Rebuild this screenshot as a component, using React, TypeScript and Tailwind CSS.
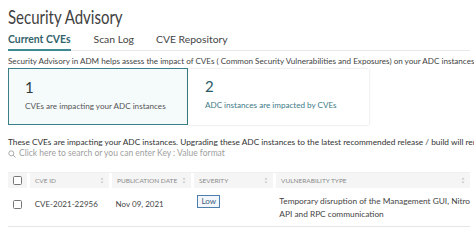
import React from "react";

function SortIcon() {
  return (
    <svg width="4" height="7" viewBox="0 0 4 7" className="shrink-0">
      <path d="M2 0.5 L3.5 2.5 H0.5 Z" fill="#c8c8c8" />
      <path d="M2 6.5 L3.5 4.5 H0.5 Z" fill="#c8c8c8" />
    </svg>
  );
}

function Checkbox() {
  return <div className="w-[9px] h-[9px] border border-[#777] rounded-[1.5px] bg-white" />;
}

export default function App() {
  return (
    <div className="w-[474px] h-[247px] overflow-hidden bg-white text-[#333]" style={{ fontFamily: "Lato, 'Open Sans', sans-serif" }}>
      <div className="pl-[8px]">
        <div className="pt-[2px] text-[20px] leading-[28px] text-[#404040] whitespace-nowrap origin-left scale-x-[0.75]">Security Advisory</div>
        <div className="flex items-end h-[21px] border-b border-[#e8e8e8] mr-[4px]">
          <div className="h-full flex flex-col justify-end">
            <div className="text-[10.4px] font-bold text-[#33636b] leading-[14px]">Current CVEs</div>
            <div className="h-[2px] bg-[#3f8a91] mt-[3px] mb-[-1px]" />
          </div>
          <div className="ml-[23px] text-[10.4px] text-[#444] leading-[14px] pb-[4px]">Scan Log</div>
          <div className="ml-[22px] text-[10.4px] text-[#444] leading-[14px] pb-[4px]">CVE Repository</div>
        </div>
        <div className="mt-[5px] text-[8.1px] leading-[11px] text-[#444] whitespace-nowrap">
          Security Advisory in ADM helps assess the impact of CVEs ( Common Security Vulnerabilities and Exposures) on your ADC instances
        </div>
        <div className="flex mt-[1px]">
          <div className="w-[180px] h-[57px] border border-[#3b7f86] bg-[#f5fafb] pl-[16px] pt-[10px]">
            <div className="text-[15px] leading-[16px] text-[#2b3a3c]">1</div>
            <div className="mt-[6px] text-[8.1px] leading-[11px] text-[#555] whitespace-nowrap">CVEs are impacting your ADC instances</div>
          </div>
          <div className="w-[181px] h-[56px] mt-[1px] bg-white shadow-[0_0_2px_rgba(0,0,0,0.18)] pl-[17px] pt-[9px]">
            <div className="text-[15px] leading-[16px] text-[#2b5a66]">2</div>
            <div className="mt-[6px] text-[8.1px] leading-[11px] text-[#3e7a86] whitespace-nowrap">ADC instances are impacted by CVEs</div>
          </div>
        </div>
        <div className="mt-[12px] text-[8.3px] leading-[11px] text-[#333] whitespace-nowrap">
          These CVEs are impacting your ADC instances. Upgrading these ADC instances to the latest recommended release / build will remediate
        </div>
        <div className="flex items-center gap-[3px] text-[8.5px] leading-[11px] text-[#a0a0a0] whitespace-nowrap">
          <svg width="8" height="8" viewBox="0 0 8 8">
            <circle cx="3.3" cy="3.3" r="2.5" fill="none" stroke="#a0a0a0" strokeWidth="0.9" />
            <path d="M5.1 5.1 L7.4 7.4" stroke="#a0a0a0" strokeWidth="0.9" />
          </svg>
          <span>Click here to search or you can enter Key : Value format</span>
        </div>
        <div className="mt-[13px] mr-[4px] flex h-[16px] border-t border-[#f0f0f0] gap-[3px] text-[6.5px] text-[#8a8a8a] uppercase">
          <div className="w-[19px] flex items-center justify-center bg-[#f5f5f5]"><Checkbox /></div>
          <div className="w-[79px] flex items-center justify-between bg-[#f5f5f5] px-[5px]"><span>CVE ID</span><SortIcon /></div>
          <div className="w-[79px] flex items-center justify-between bg-[#f5f5f5] px-[5px]"><span>Publication Date</span><SortIcon /></div>
          <div className="w-[79px] flex items-center justify-between bg-[#f5f5f5] px-[5px]"><span>Severity</span><SortIcon /></div>
          <div className="flex-1 flex items-center justify-between bg-[#f5f5f5] px-[5px]"><span>Vulnerability Type</span><SortIcon /></div>
        </div>
        <div className="mr-[4px] flex h-[39px] border-b border-[#e6e6e6] gap-[3px] text-[8px] leading-[14px] text-[#444]">
          <div className="w-[19px] flex items-start justify-center pt-[12px]"><Checkbox /></div>
          <div className="w-[79px] pl-[5px] pt-[9px] whitespace-nowrap">CVE-2021-22956</div>
          <div className="w-[79px] pl-[5px] pt-[9px] whitespace-nowrap">Nov 09, 2021</div>
          <div className="w-[79px] pl-[6px] pt-[6px]">
            <span className="inline-block border border-[#4d7fae] bg-[#f3f7fb] px-[3px] py-[0.5px] leading-[10px] text-[#3d5f80]">Low</span>
          </div>
          <div className="flex-1 pl-[7px] pt-[7px] text-[8.3px] leading-[13px] whitespace-nowrap">
            Temporary disruption of the Management GUI, Nitro<br />API and RPC communication
          </div>
        </div>
      </div>
    </div>
  );
}
